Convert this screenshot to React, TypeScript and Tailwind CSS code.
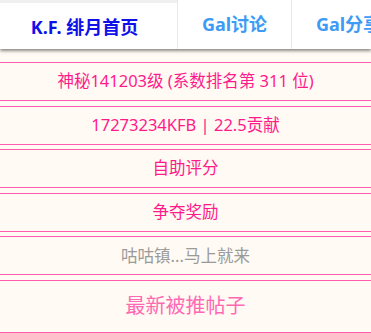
import React from 'react';

type Tab = {
  label: string;
  width: string;
  active?: boolean;
};

const tabs: Tab[] = [
  { label: 'K.F. 绯月首页', width: 'w-[177px]', active: true },
  { label: 'Gal讨论', width: 'w-[114px]' },
  { label: 'Gal分享', width: 'w-[114px]' },
];

const rows = [
  { text: '神秘141203级 (系数排名第 311 位)', tone: 'text-[#ff1a8c]' },
  { text: '17273234KFB | 22.5贡献', tone: 'text-[#ff1a8c]' },
  { text: '自助评分', tone: 'text-[#ff1a8c]' },
  { text: '争夺奖励', tone: 'text-[#ff1a8c]' },
  { text: '咕咕镇...马上就来', tone: 'text-[#9a9a9a]' },
];

const App = () => {
  return (
    <div
      className="w-[371px] h-[333px] overflow-hidden bg-[#fffaf3]"
      style={{ fontFamily: '"Noto Sans", "Noto Sans CJK SC", sans-serif' }}
    >
      {/* top tab bar */}
      <nav className="relative z-10 flex h-[49px] bg-white shadow-[0_2px_3px_rgba(0,0,0,0.45)]">
        {tabs.map((tab, i) => (
          <div
            key={tab.label}
            className={`${tab.width} shrink-0 flex items-center justify-center text-[18px] font-bold whitespace-nowrap ${
              i > 0 ? 'border-l border-[#e6e8f2]' : ''
            } ${tab.active ? 'text-[#1010e8] border-t-[3px] border-[#efefef] pt-[2px] pr-[8px]' : 'text-[#3d9bf5]'}`}
          >
            {tab.label}
          </div>
        ))}
      </nav>

      {/* info rows */}
      <div className="flex flex-col gap-[4.6px] pt-[13px]">
        {rows.map((row) => (
          <div
            key={row.text}
            className={`h-[39px] flex items-center justify-center border-y border-[#ff5cb0] text-[16.5px] ${row.tone}`}
          >
            {row.text}
          </div>
        ))}
        <div className="h-[53px] flex items-center justify-center border-y border-[#ff5cb0] text-[20px] text-[#ff69b4]">
          最新被推帖子
        </div>
      </div>
    </div>
  );
};

export default App;
